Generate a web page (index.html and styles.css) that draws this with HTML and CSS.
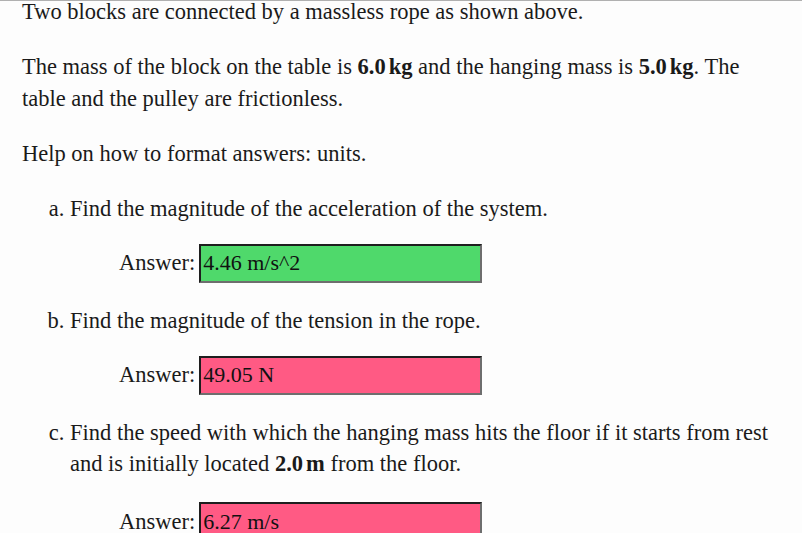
FILE: index.html
```html
<!DOCTYPE html>
<html>
<head>
<meta charset="utf-8">
<link rel="stylesheet" href="styles.css">
</head>
<body>
<div class="page">
  <p class="para first">Two blocks are connected by a massless rope as shown above.</p>
  <p class="para">The mass of the block on the table is <b class="qty">6.0</b><b class="qty unit">kg</b> and the hanging mass is <b class="qty">5.0</b><b class="qty unit">kg</b>. The table and the pulley are frictionless.</p>
  <p class="para">Help on how to format answers: units.</p>
  <ol class="parts">
    <li class="part">
      <p class="para">Find the magnitude of the acceleration of the system.</p>
      <div class="answer"><span class="label">Answer:</span><input class="field correct" type="text" value="4.46 m/s^2"></div>
    </li>
    <li class="part">
      <p class="para">Find the magnitude of the tension in the rope.</p>
      <div class="answer"><span class="label">Answer:</span><input class="field wrong" type="text" value="49.05 N"></div>
    </li>
    <li class="part">
      <p class="para two-line">Find the speed with which the hanging mass hits the floor if it starts from rest and is initially located <b class="qty">2.0</b><b class="qty unit">m</b> from the floor.</p>
      <div class="answer"><span class="label">Answer:</span><input class="field wrong" type="text" value="6.27 m/s"></div>
    </li>
  </ol>
</div>
</body>
</html>
```
FILE: styles.css
```css
html, body {
  margin: 0;
  padding: 0;
  background: #fdfdfd;
}
body {
  overflow: hidden;
}
.page {
  border-top: 1px solid #b0b0b0;
  padding: 0 24px 0 22px;
  font-family: "Liberation Serif", "Times New Roman", serif;
  font-size: 22.5px;
  line-height: 31.5px;
  color: #1a1a1a;
}
.para {
  margin: 0 0 23.5px 0;
}
.para.first {
  margin-top: -5px;
}
.qty {
  font-weight: bold;
}
.unit {
  margin-left: 3px;
}
.parts {
  margin: 0;
  padding: 0 0 0 48px;
  list-style: lower-alpha;
}
.part .para {
  margin-bottom: 19.5px;
}
.part .para.two-line {
  margin-bottom: 22.5px;
}
.answer {
  display: flex;
  align-items: center;
  margin: 0 0 0 49px;
  padding: 0 0 22px 0;
}
.label {
  margin-right: 4px;
}
.field {
  box-sizing: border-box;
  width: 283px;
  height: 39px;
  margin: 0;
  padding: 0 2px;
  border-style: solid;
  border-width: 2px;
  border-color: #1e1e1e #6e6e6e #6e6e6e #1e1e1e;
  font-family: "Liberation Serif", "Times New Roman", serif;
  font-size: 22px;
  color: #111;
  outline: none;
}
.correct {
  background: #4fd96b;
}
.wrong {
  background: #ff5a84;
}
```
